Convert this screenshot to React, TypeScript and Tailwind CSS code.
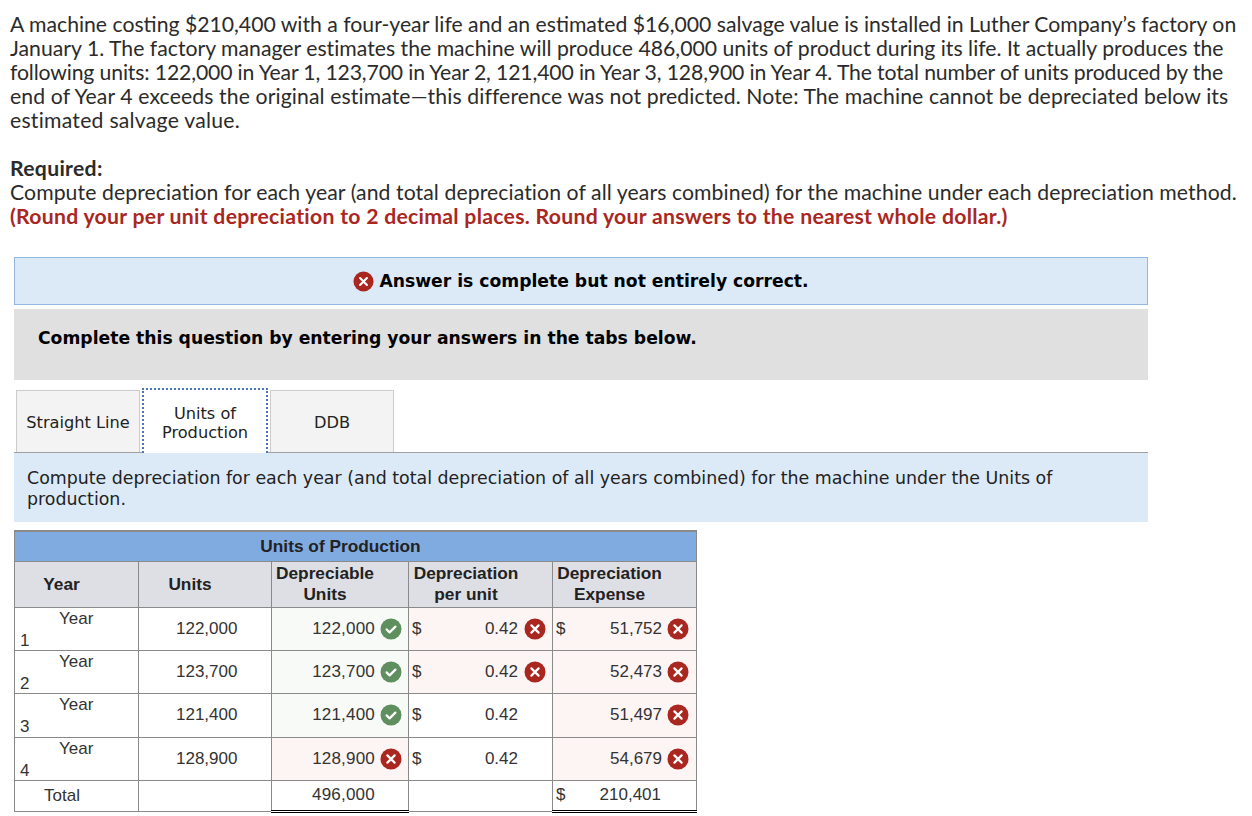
const verdana = { fontFamily: '"DejaVu Sans", sans-serif' };

function XIcon({ className = "" }: { className?: string }) {
  return (
    <svg viewBox="0 0 22 22" className={`h-[22px] w-[22px] shrink-0 ${className}`}>
      <circle cx="11" cy="11" r="10.5" fill="#a9271f" />
      <path d="M7.4 7.4l7.2 7.2M14.6 7.4l-7.2 7.2" stroke="#fff" strokeWidth="2.2" strokeLinecap="round" />
    </svg>
  );
}

function CheckIcon() {
  return (
    <svg viewBox="0 0 22 22" className="h-[22px] w-[22px] shrink-0">
      <circle cx="11" cy="11" r="10.5" fill="#5f8f5f" />
      <path d="M6.6 11.4l3 3 5.8-5.8" fill="none" stroke="#fff" strokeWidth="2.2" strokeLinecap="round" strokeLinejoin="round" />
    </svg>
  );
}

type Mark = "x" | "check" | null;

type Row = {
  year: string;
  units: string;
  dep: string;
  depMark: Mark;
  rate: string;
  rateMark: Mark;
  expense: string;
  firstDollar?: boolean;
  h: string;
};

const rows: Row[] = [
  { year: "1", units: "122,000", dep: "122,000", depMark: "check", rate: "0.42", rateMark: "x", expense: "51,752", firstDollar: true, h: "h-[43px]" },
  { year: "2", units: "123,700", dep: "123,700", depMark: "check", rate: "0.42", rateMark: "x", expense: "52,473", h: "h-[43px]" },
  { year: "3", units: "121,400", dep: "121,400", depMark: "check", rate: "0.42", rateMark: null, expense: "51,497", h: "h-[44px]" },
  { year: "4", units: "128,900", dep: "128,900", depMark: "x", rate: "0.42", rateMark: null, expense: "54,679", h: "h-[43px]" },
];

const cell = "border border-[#8a8a8a] p-0";
const head = "text-[17.3px] leading-[21px] font-bold";
const pink = "bg-[#fdf4f4]";
const green = "bg-[#f7faf6]";

function MarkIcon({ mark }: { mark: Mark }) {
  if (mark === "x") return <XIcon />;
  if (mark === "check") return <CheckIcon />;
  return <span className="h-[22px] w-[22px] shrink-0" />;
}

function Table() {
  return (
    <table
      className="ml-[14px] mt-[8px] w-[682px] table-fixed border-collapse text-[17px] leading-[20px] text-[#333]"
      style={{ fontFamily: '"Liberation Sans", Arial, sans-serif' }}
    >
      <colgroup>
        <col className="w-[124px]" />
        <col className="w-[133px]" />
        <col className="w-[137px]" />
        <col className="w-[144px]" />
        <col className="w-[144px]" />
      </colgroup>
      <thead className="text-[#222]">
        <tr className="h-[30px]">
          <th colSpan={5} className={`${cell} ${head} border-t-2 bg-[#80abe0] pr-[30px] text-center`}>
            Units of Production
          </th>
        </tr>
        <tr className="h-[46px] bg-[#dedfe4]">
          <th className={`${cell} ${head} pr-[30px]`}>Year</th>
          <th className={`${cell} ${head} pr-[30px]`}>Units</th>
          <th className={`${cell} ${head} pr-[30px]`}>Depreciable<br />Units</th>
          <th className={`${cell} ${head} pr-[29px]`}>Depreciation<br />per unit</th>
          <th className={`${cell} ${head} pr-[30px]`}>Depreciation<br />Expense</th>
        </tr>
      </thead>
      <tbody>
        {rows.map((r) => (
          <tr key={r.year} className={r.h}>
            <td className={`${cell} pl-[5px] pt-[1px] align-top`}>
              <div className="pl-[39px]">Year</div>
              <div className="-mb-[1px] mt-[2px]">{r.year}</div>
            </td>
            <td className={`${cell} pl-[37px]`}>{r.units}</td>
            <td className={`${cell} ${r.depMark === "x" ? pink : green}`}>
              <div className="flex items-center justify-end gap-[5px] pr-[6px] tracking-[0.2px]">
                {r.dep}
                <MarkIcon mark={r.depMark} />
              </div>
            </td>
            <td className={`${cell} ${r.rateMark ? pink : ""}`}>
              <div className="flex items-center justify-between pl-[3px] pr-[6px]">
                <span>$</span>
                <span className="flex items-center gap-[6px]">
                  {r.rate}
                  <MarkIcon mark={r.rateMark} />
                </span>
              </div>
            </td>
            <td className={`${cell} ${pink}`}>
              <div className="flex items-center justify-between pl-[3px] pr-[7px]">
                <span>{r.firstDollar ? "$" : ""}</span>
                <span className="flex items-center gap-[5px]">
                  {r.expense}
                  <XIcon />
                </span>
              </div>
            </td>
          </tr>
        ))}
        <tr className="h-[31px]">
          <td className={`${cell} pl-[29px]`}>Total</td>
          <td className={cell} />
          <td className={`${cell} border-t-black border-b-[3px] border-b-black [border-bottom-style:double] pl-[40px] tracking-[0.2px]`}>496,000</td>
          <td className={cell} />
          <td className={`${cell} border-t-black border-b-[3px] border-b-black [border-bottom-style:double]`}>
            <div className="flex items-center justify-between pl-[3px] pr-[35px]">
              <span>$</span>
              <span>210,401</span>
            </div>
          </td>
        </tr>
      </tbody>
    </table>
  );
}

export default function App() {
  return (
    <div className="h-[816px] w-[1252px] overflow-hidden bg-white text-black">
      <div className="px-[10px] pt-[12px] text-[21.2px] leading-[24px] text-[#2b2b2b]" style={{ fontFamily: "Lato, sans-serif" }}>
        <div className="whitespace-nowrap">
          <p>A machine costing $210,400 with a four-year life and an estimated $16,000 salvage value is installed in Luther Company’s factory on</p>
          <p className="tracking-[0.015px]">January 1. The factory manager estimates the machine will produce 486,000 units of product during its life. It actually produces the</p>
          <p className="tracking-[-0.14px]">following units: 122,000 in Year 1, 123,700 in Year 2, 121,400 in Year 3, 128,900 in Year 4. The total number of units produced by the</p>
          <p className="tracking-[0.11px]">end of Year 4 exceeds the original estimate—this difference was not predicted. Note: The machine cannot be depreciated below its</p>
          <p className="tracking-[0.25px]">estimated salvage value.</p>
        </div>
        <div className="mt-[24px] whitespace-nowrap">
          <p className="font-bold tracking-[0.3px]">Required:</p>
          <p className="tracking-[0.09px]">Compute depreciation for each year (and total depreciation of all years combined) for the machine under each depreciation method.</p>
          <p className="font-bold tracking-[0.29px] text-[#a9271f]">(Round your per unit depreciation to 2 decimal places. Round your answers to the nearest whole dollar.)</p>
        </div>
      </div>

      <div style={verdana}>
        <div className="ml-[14px] mt-[29px] flex h-[48px] w-[1134px] items-center justify-center gap-[5px] border border-[#93b7dd] bg-[#dceaf8] pt-[1px] text-[17.2px] font-bold">
          <XIcon className="!h-[21px] !w-[21px]" />
          Answer is complete but not entirely correct.
        </div>
        <div className="ml-[14px] mt-[4px] h-[71px] w-[1134px] bg-[#e0e0e0] pl-[24px] pt-[17px] text-[17.2px] font-bold leading-[24px]">
          Complete this question by entering your answers in the tabs below.
        </div>

        <div className="ml-[14px] mt-[10px] flex h-[63px] w-[1134px] items-end gap-[2px] border-b border-[#a0a0a0] pl-[2px] text-[16.2px] leading-[19px] text-[#222]">
          <div className="flex h-[62px] w-[124px] items-center justify-center border border-b-0 border-[#cccccc] bg-[#f3f3f3] pt-[2px]">Straight Line</div>
          <div className="relative z-10 -mb-[1px] flex h-[65px] w-[126px] items-center justify-center border-2 border-b-0 border-dotted border-[#4a76b8] bg-white pt-[2px] text-center">
            Units of<br />Production
          </div>
          <div className="flex h-[62px] w-[124px] items-center justify-center border border-b-0 border-[#cccccc] bg-[#f3f3f3] pt-[2px]">DDB</div>
        </div>

        <div className="ml-[14px] h-[69px] w-[1134px] bg-[#dceaf8] pl-[13px] pt-[15px] text-[17.4px] leading-[21px] text-[#222]">
          Compute depreciation for each year (and total depreciation of all years combined) for the machine under the Units of<br />
          production.
        </div>
      </div>

      <Table />
    </div>
  );
}
